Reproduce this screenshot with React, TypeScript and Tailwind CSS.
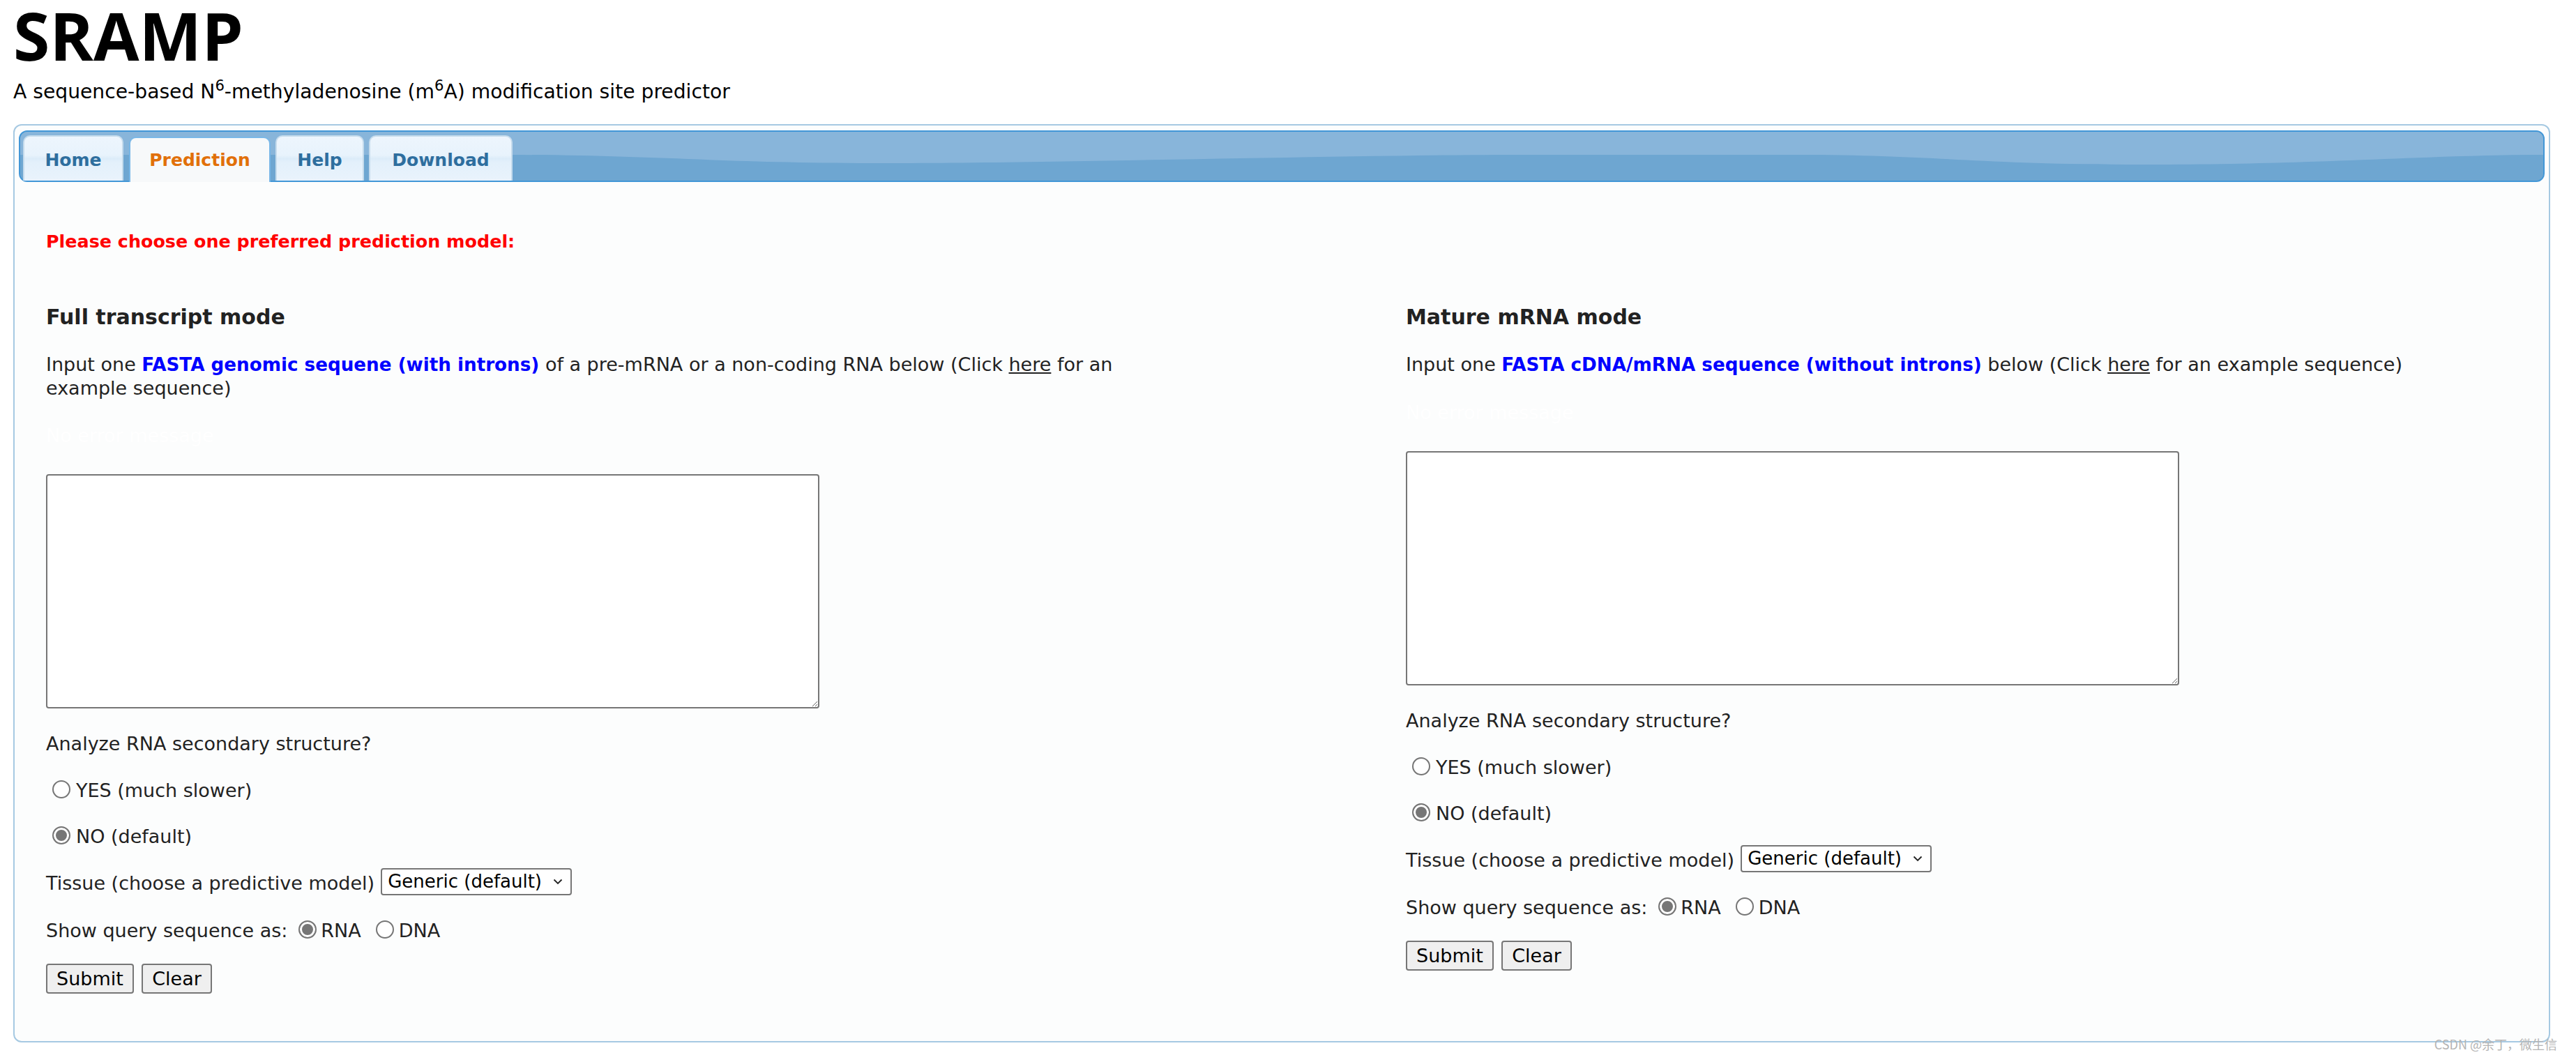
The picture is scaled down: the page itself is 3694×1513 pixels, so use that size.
import React from "react";

function Radio({ checked, name }: { checked?: boolean; name: string }) {
  return (
    <input
      type="radio"
      name={name}
      defaultChecked={checked}
      className="appearance-none m-0 w-[26px] h-[26px] shrink-0 rounded-full border-2 border-[#767676] bg-white checked:bg-[#767676] checked:shadow-[inset_0_0_0_3px_#ffffff]"
    />
  );
}

function Tab({ label, active, w }: { label: string; active?: boolean; w: string }) {
  if (active) {
    return (
      <div
        className={`relative ${w} h-[65px] -mb-[2px] border-2 border-b-0 border-[#79b7e7] rounded-t-[10px] bg-[#f7f9fa] pt-[16px] text-center text-[25px] font-bold leading-[31px] text-[#e17009]`}
      >
        {label}
      </div>
    );
  }
  return (
    <div
      className={`relative ${w} h-[65px] border-2 border-b-0 border-[#c5dbec] rounded-t-[10px] bg-[linear-gradient(to_bottom,#edf5fd_0%,#e8f3fc_42%,#dcecf9_50%,#e3f0fb_58%,#e9f3fc_100%)] pt-[18px] text-center text-[25px] font-bold leading-[31px] text-[#2e6e9e]`}
    >
      {label}
    </div>
  );
}

function Column({ mode, group }: { mode: "full" | "mature"; group: string }) {
  return (
    <div className="flex flex-col items-start">
      <div className="mt-[75px] text-[30px] font-bold leading-[36px] text-[#222222]">
        {mode === "full" ? "Full transcript mode" : "Mature mRNA mode"}
      </div>
      {mode === "full" ? (
        <div className="mt-[33px] text-[27px] leading-[33px]">
          <span className="whitespace-nowrap">
            Input one{" "}
            <b className="text-[26.2px] text-[#0000ff]">FASTA genomic sequene (with introns)</b> of a
            pre-mRNA or a non-coding RNA below (Click{" "}
            <span className="underline">here</span> for an
          </span>
          <br />
          example sequence)
        </div>
      ) : (
        <div className="mt-[33px] whitespace-nowrap text-[27px] leading-[33px]">
          Input one{" "}
          <b className="text-[26.2px] text-[#0000ff]">FASTA cDNA/mRNA sequence (without introns)</b> below
          (Click <span className="underline">here</span> for an example sequence)
        </div>
      )}
      <div className="mt-[35px] text-[27px] leading-[33px] text-white">No error message</div>
      <textarea className="mt-[39px] block w-[1109px] h-[336px] border-2 border-[#767676] rounded-[4px] bg-white p-[4px] text-[27px] outline-none" />
      <div className="mt-[34px] text-[27px] leading-[33px]">Analyze RNA secondary structure?</div>
      <label className="mt-[34px] flex h-[33px] items-center text-[27px] leading-[33px]">
        <span className="ml-[9px] mr-[8px] mb-[4px] flex">
          <Radio name={`${group}-ss`} />
        </span>
        YES (much slower)
      </label>
      <label className="mt-[33px] flex h-[33px] items-center text-[27px] leading-[33px]">
        <span className="ml-[9px] mr-[8px] mb-[4px] flex">
          <Radio name={`${group}-ss`} checked />
        </span>
        NO (default)
      </label>
      <div className="mt-[34px] flex h-[33px] items-center text-[27px] leading-[33px]">
        <span>Tissue (choose a predictive model)</span>
        <div className="relative ml-[9px] mb-[4px] flex">
          <select className="appearance-none w-[274px] h-[39px] border-2 border-[#767676] rounded-[4px] bg-white pl-[8px] pr-[30px] text-[26px] leading-[33px] text-black outline-none">
            <option>Generic (default)</option>
          </select>
          <svg
            className="pointer-events-none absolute right-[13px] top-[15px] w-[14px] h-[9px]"
            viewBox="0 0 14 9"
          >
            <polyline points="1.5,1.5 7,7 12.5,1.5" fill="none" stroke="#222" strokeWidth="1.8" />
          </svg>
        </div>
      </div>
      <div className="mt-[35px] flex h-[33px] items-center text-[27px] leading-[33px]">
        <span>Show query sequence as:</span>
        <span className="ml-[16px] mr-[6px] mb-[4px] flex">
          <Radio name={`${group}-as`} checked />
        </span>
        RNA
        <span className="ml-[21px] mr-[7px] mb-[4px] flex">
          <Radio name={`${group}-as`} />
        </span>
        DNA
      </div>
      <div className="mt-[31px] flex gap-[11px]">
        <button className="w-[126px] h-[43px] border-2 border-[#767676] rounded-[4px] bg-[#efefef] text-[27px] leading-none text-black">
          Submit
        </button>
        <button className="w-[101px] h-[43px] border-2 border-[#767676] rounded-[4px] bg-[#efefef] text-[27px] leading-none text-black">
          Clear
        </button>
      </div>
    </div>
  );
}

export default function App() {
  return (
    <div className="relative flex min-h-screen flex-col items-start bg-white px-[19px] font-['DejaVu_Sans',sans-serif] text-[#222222]">
      <h1 className="font-['Open_Sans',sans-serif] text-[95px] font-bold leading-[100px] text-black">
        SRAMP
      </h1>
      <div className="mt-[15px] text-[28.2px] leading-[33px] text-black">
        A sequence-based N<sup>6</sup>-methyladenosine (m<sup>6</sup>A) modification site predictor
      </div>

      <div className="mt-[30px] w-[3638px] border-2 border-[#a6c9e2] rounded-[12px] bg-[#fcfdfd] px-[6px] pt-[7px]">
        <div className="relative flex h-[74px] items-end gap-[7px] border-2 border-[#4297d7] rounded-[12px] bg-[#6ea6d1] pl-[4px]">
          <div className="absolute inset-0 overflow-hidden rounded-[10px]">
            <svg className="block w-full h-full" viewBox="0 0 3619 70" preserveAspectRatio="none">
              <rect x="0" y="0" width="3619" height="70" fill="#6ea6d1" />
              <path
                d="M0,0 H3619 V33 C3450,33 3300,47 3050,47 C2800,47 2750,33 2550,33 L2150,33 C1900,33 1500,45 1250,45 C1000,45 900,33 700,33 L0,33 Z"
                fill="#88b5da"
              />
            </svg>
          </div>
          <div className="mr-[1px] flex">
            <Tab label="Home" w="w-[144px]" />
          </div>
          <Tab label="Prediction" w="w-[203px]" active />
          <Tab label="Help" w="w-[127px]" />
          <Tab label="Download" w="w-[206px]" />
        </div>

        <div className="pl-[39px] pt-[70px] pb-[68px]">
          <div className="text-[25.4px] font-bold leading-[31px] text-[#ff0000]">
            Please choose one preferred prediction model:
          </div>
          <div className="flex items-start">
            <div className="w-[1950px] shrink-0">
              <Column mode="full" group="full" />
            </div>
            <div className="flex-1">
              <Column mode="mature" group="mature" />
            </div>
          </div>
        </div>
      </div>

      <div className="absolute right-[27px] top-[1486px] font-['Noto_Sans_CJK_SC',sans-serif] text-[18px] leading-[22px] text-[#b4b4b4]">
        CSDN @余丁，微生信
      </div>
    </div>
  );
}
